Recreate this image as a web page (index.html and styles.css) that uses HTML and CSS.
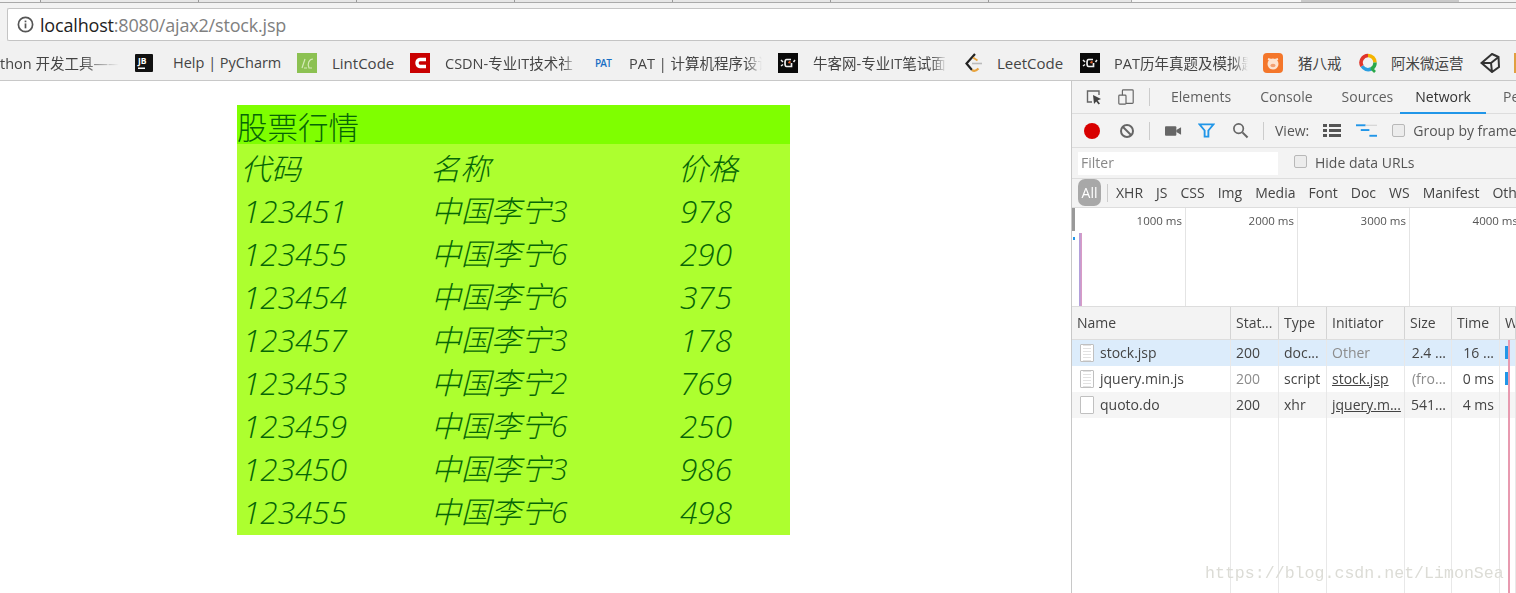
FILE: index.html
```html
<!DOCTYPE html>
<html lang="zh-CN">

<head>
    <meta charset="UTF-8">
    <title>stock.jsp</title>
    <link rel="stylesheet" href="styles.css">
</head>

<body>
    <div class="browser">
        <div class="tabstrip">
            <div class="tab"></div>
            <div class="tab"></div>
            <div class="tab"></div>
            <div class="tab"></div>
            <div class="tab"></div>
            <div class="tab"></div>
            <div class="tab tab-last"></div>
            <div class="tab tab-active"></div>
            <div class="tab tab-back"></div>
        </div>

        <div class="addressrow">
            <div class="address">
                <svg class="info-icon" viewBox="0 0 16 16">
                    <circle cx="8" cy="8" r="6.7" fill="none" stroke="#555" stroke-width="1.6" />
                    <rect x="7.2" y="7" width="1.6" height="4.6" fill="#555" />
                    <rect x="7.2" y="4.3" width="1.6" height="1.6" fill="#555" />
                </svg>
                <span class="host">localhost</span><span class="path">:8080/ajax2/stock.jsp</span>
            </div>
        </div>

        <div class="bookmarks">
            <div class="bm bm-cut">thon 开发工具——</div>
            <div class="bm bm-jb">
                <svg class="bm-icon" viewBox="0 0 18 18">
                    <rect width="18" height="18" rx="1" fill="#111" />
                    <text x="3" y="10" class="jb-text">JB</text>
                    <rect x="3" y="13.5" width="7" height="1.5" fill="#fff" />
                </svg>
                <span class="bm-text">Help | PyCharm</span>
            </div>
            <div class="bm bm-lint">
                <svg class="bm-icon" viewBox="0 0 20 20">
                    <rect width="20" height="20" fill="#8cc152" />
                    <path d="M5 15 L8 6 M7 15 H10 M16 6 C12 6 10 11 12 15 H15" fill="none" stroke="#d5eab8" stroke-width="1.2" />
                </svg>
                <span class="bm-text bm-wide">LintCode</span>
            </div>
            <div class="bm bm-csdn">
                <svg class="bm-icon" viewBox="0 0 20 20">
                    <rect width="20" height="20" fill="#c90000" />
                    <path d="M16 6.5 H10 C6 6.5 6 13.5 10 13.5 H16" fill="none" stroke="#fff" stroke-width="3.4" />
                </svg>
                <span class="bm-text fade">CSDN-专业IT技术社</span>
            </div>
            <div class="bm bm-pat">
                <span class="pat-logo">PAT</span>
                <span class="bm-text fade">PAT | 计算机程序设计</span>
            </div>
            <div class="bm bm-nk">
                <svg class="bm-icon" viewBox="0 0 20 20">
                    <use href="#nk-logo" />
                </svg>
                <span class="bm-text fade">牛客网-专业IT笔试面</span>
            </div>
            <div class="bm bm-leet">
                <svg class="bm-icon" viewBox="0 0 20 20">
                    <path d="M11 1 L2.5 10.5 L8 17" fill="none" stroke="#222" stroke-width="2.2" />
                    <path d="M8 17 C10 18.5 12 18 14.5 15.5" fill="none" stroke="#e8a33d" stroke-width="2.2" />
                    <path d="M8 10.5 H18" fill="none" stroke="#bbb" stroke-width="1.6" />
                    <path d="M9 4.5 L13.5 7.5" fill="none" stroke="#e8a33d" stroke-width="1.8" />
                </svg>
                <span class="bm-text bm-wide">LeetCode</span>
            </div>
            <div class="bm bm-patreal">
                <svg class="bm-icon" viewBox="0 0 20 20">
                    <use href="#nk-logo" />
                </svg>
                <span class="bm-text fade">PAT历年真题及模拟题</span>
            </div>
            <div class="bm bm-pig">
                <svg class="bm-icon" viewBox="0 0 20 20">
                    <rect width="20" height="20" rx="4" fill="#f4762a" />
                    <circle cx="10" cy="11" r="5.5" fill="#fde3cf" />
                    <path d="M5 6 L8 7 M15 6 L12 7" stroke="#fde3cf" stroke-width="2" />
                    <ellipse cx="10" cy="12.5" rx="2.6" ry="1.7" fill="#f4a070" />
                </svg>
                <span class="bm-text">猪八戒</span>
            </div>
            <div class="bm bm-ami">
                <svg class="bm-icon" viewBox="0 0 20 20">
                    <path d="M10 2.5 A7 7 0 0 1 17 9.5" fill="none" stroke="#f4b400" stroke-width="3.6" />
                    <path d="M17 9.5 A7 7 0 0 1 13 16" fill="none" stroke="#2aa84a" stroke-width="3.6" />
                    <path d="M13 16 A7 7 0 0 1 4 13" fill="none" stroke="#2a9ee0" stroke-width="3.6" />
                    <path d="M4 13 A7 7 0 0 1 10 2.5" fill="none" stroke="#e0352b" stroke-width="3.6" />
                    <path d="M13 15 L17 19" stroke="#2aa84a" stroke-width="2.6" />
                </svg>
                <span class="bm-text">阿米微运营</span>
            </div>
            <div class="bm bm-unity">
                <svg class="bm-icon" viewBox="0 0 20 20">
                    <path d="M12 1 L18.5 4 L19 14 L12 19 L1.5 10 Z M1.5 10 H11 L18.5 4 M11 10 L12 19" fill="none" stroke="#333" stroke-width="2" />
                </svg>
            </div>
            <div class="bm-next"></div>
        </div>

        <div class="workspace">
            <div class="page">
                <div class="stock">
                    <div class="stock-title">股票行情</div>
                    <table class="stock-table">
                        <thead>
                            <tr><th>代码</th><th>名称</th><th>价格</th></tr>
                        </thead>
                        <tbody>
                            <tr><td>123451</td><td>中国李宁3</td><td>978</td></tr>
                            <tr><td>123455</td><td>中国李宁6</td><td>290</td></tr>
                            <tr><td>123454</td><td>中国李宁6</td><td>375</td></tr>
                            <tr><td>123457</td><td>中国李宁3</td><td>178</td></tr>
                            <tr><td>123453</td><td>中国李宁2</td><td>769</td></tr>
                            <tr><td>123459</td><td>中国李宁6</td><td>250</td></tr>
                            <tr><td>123450</td><td>中国李宁3</td><td>986</td></tr>
                            <tr><td>123455</td><td>中国李宁6</td><td>498</td></tr>
                        </tbody>
                    </table>
                </div>
            </div>

            <div class="devtools">
                <div class="dt-tabs">
                    <svg class="dt-icon" viewBox="0 0 18 18">
                        <path d="M7 14 H2.5 V3 H14 V7" fill="none" stroke="#666" stroke-width="1.4" />
                        <path d="M8 7 L16 11 L12.6 12.4 L15 15.5 L13.6 16.6 L11.2 13.4 L9 16 Z" fill="#444" />
                    </svg>
                    <svg class="dt-icon" viewBox="0 0 20 20">
                        <rect x="6" y="2" width="12" height="15" rx="1" fill="none" stroke="#666" stroke-width="1.3" />
                        <rect x="2" y="8" width="8" height="10" rx="1" fill="#f3f3f3" stroke="#666" stroke-width="1.3" />
                    </svg>
                    <span class="dt-sep"></span>
                    <span class="dt-tab">Elements</span>
                    <span class="dt-tab">Console</span>
                    <span class="dt-tab">Sources</span>
                    <span class="dt-tab dt-tab-on">Network</span>
                    <span class="dt-tab">Pe</span>
                </div>

                <div class="dt-tools">
                    <span class="rec"></span>
                    <svg class="tool-clear" viewBox="0 0 16 16">
                        <circle cx="8" cy="8" r="6" fill="none" stroke="#666" stroke-width="2" />
                        <path d="M4 4 L12 12" stroke="#666" stroke-width="2" />
                    </svg>
                    <span class="dt-sep"></span>
                    <svg class="tool-cam" viewBox="0 0 18 12">
                        <rect x="0" y="1" width="12" height="10" rx="1" fill="#666" />
                        <path d="M12 5 L17 2 V10 L12 7 Z" fill="#666" />
                    </svg>
                    <svg class="tool-filter" viewBox="0 0 18 16">
                        <path d="M1.5 1.5 H16.5 L11 8 V14.5 H7 V8 Z" fill="none" stroke="#2196e8" stroke-width="2" />
                    </svg>
                    <svg class="tool-search" viewBox="0 0 18 18">
                        <circle cx="7" cy="7" r="5" fill="none" stroke="#666" stroke-width="1.8" />
                        <path d="M11 11 L16.5 16.5" stroke="#666" stroke-width="2.2" />
                    </svg>
                    <span class="dt-sep"></span>
                    <span class="view-label">View:</span>
                    <svg class="tool-list" viewBox="0 0 18 13">
                        <path d="M0 1.5 H4 M6 1.5 H18 M0 6.5 H4 M6 6.5 H18 M0 11.5 H4 M6 11.5 H18" stroke="#555" stroke-width="3" />
                    </svg>
                    <svg class="tool-wf" viewBox="0 0 22 14">
                        <path d="M0 1 H10" stroke="#2196e8" stroke-width="2" />
                        <path d="M10 1 H22" stroke="#ccc" stroke-width="1" />
                        <path d="M5 6 H14" stroke="#2196e8" stroke-width="2" />
                        <path d="M14 12 H22" stroke="#2196e8" stroke-width="2" />
                    </svg>
                    <span class="check"></span>
                    <span class="group-label">Group by frame</span>
                </div>

                <div class="dt-filter">
                    <div class="filter-input">Filter</div>
                    <span class="check"></span>
                    <span class="hide-label">Hide data URLs</span>
                </div>

                <div class="dt-types">
                    <span class="type-all">All</span>
                    <span class="types-sep"></span>
                    <span>XHR</span>
                    <span>JS</span>
                    <span>CSS</span>
                    <span>Img</span>
                    <span>Media</span>
                    <span>Font</span>
                    <span>Doc</span>
                    <span>WS</span>
                    <span>Manifest</span>
                    <span>Other</span>
                </div>

                <div class="overview">
                    <div class="ov-cell"><span>1000 ms</span></div>
                    <div class="ov-cell"><span>2000 ms</span></div>
                    <div class="ov-cell"><span>3000 ms</span></div>
                    <div class="ov-cell"><span>4000 ms</span></div>
                    <i class="ov-handle"></i>
                    <i class="ov-dot"></i>
                    <i class="ov-bar"></i>
                </div>

                <div class="net">
                    <div class="net-row net-head">
                        <div>Name</div>
                        <div>Stat...</div>
                        <div>Type</div>
                        <div>Initiator</div>
                        <div>Size</div>
                        <div>Time</div>
                        <div>W</div>
                    </div>
                    <div class="net-row net-selected">
                        <div class="name-cell"><span class="file-icon file-lines"></span>stock.jsp</div>
                        <div>200</div>
                        <div>doc...</div>
                        <div class="muted">Other</div>
                        <div class="right">2.4 ...</div>
                        <div class="right">16 ...</div>
                        <div><i class="wf-bar"></i></div>
                    </div>
                    <div class="net-row">
                        <div class="name-cell"><span class="file-icon file-lines"></span>jquery.min.js</div>
                        <div class="muted">200</div>
                        <div>script</div>
                        <div class="link">stock.jsp</div>
                        <div class="right muted">(fro...</div>
                        <div class="right">0 ms</div>
                        <div><i class="wf-bar"></i></div>
                    </div>
                    <div class="net-row net-alt">
                        <div class="name-cell"><span class="file-icon"></span>quoto.do</div>
                        <div>200</div>
                        <div>xhr</div>
                        <div class="link">jquery.m...</div>
                        <div class="right">541...</div>
                        <div class="right">4 ms</div>
                        <div></div>
                    </div>
                    <div class="net-row net-fill">
                        <div></div><div></div><div></div><div></div><div></div><div></div><div></div>
                    </div>
                    <i class="wf-line"></i>
                    <div class="watermark">https://blog.csdn.net/LimonSea</div>
                </div>
            </div>
        </div>
    </div>

    <svg class="defs" width="0" height="0">
        <symbol id="nk-logo" viewBox="0 0 20 20">
            <rect width="20" height="20" fill="#0a0a0a" />
            <path d="M13 6.5 H8.5 C6.5 6.5 6.5 13.5 8.5 13.5 H13.5 V10" fill="none" stroke="#eee" stroke-width="1.7" />
            <path d="M3 7 L5 9 M3 13 L5 11.5 M17 7 L15.5 9" fill="none" stroke="#eee" stroke-width="1.5" />
            <path d="M10.5 10 L12.5 8.5" stroke="#e2622b" stroke-width="1.8" />
        </symbol>
    </svg>
</body>

</html>
```

FILE: styles.css
```css
* {
    box-sizing: border-box;
}

html,
body {
    margin: 0;
    padding: 0;
    height: 100%;
    overflow: hidden;
    background-color: #fff;
}

body {
    font-family: "Open Sans", "Noto Sans CJK SC", sans-serif;
    color: #333;
}

.defs {
    position: absolute;
}

.browser {
    display: flex;
    flex-direction: column;
    height: 593px;
    width: 1516px;
    overflow: hidden;
    filter: blur(0.35px);
}

/* tab strip, only its bottom edge is in the picture */
.tabstrip {
    display: flex;
    height: 3px;
    background-color: #f2f2f2;
    border-bottom: 1px solid #a9a9a9;
    padding-left: 40px;
}

.tab {
    width: 158px;
    border-left: 1px solid #999;
    background-color: #e6e6e6;
}

.tab-last {
    width: 143px;
}

.tab-active {
    width: 170px;
    background-color: #f6f6f6;
    border-left-color: #aaa;
}

.tab-back {
    width: 158px;
    background-color: #c9c9c9;
    border-left: 0;
}

.addressrow {
    height: 38px;
    background-color: #f2f2f2;
    padding: 5px 0 0 7px;
}

.address {
    display: flex;
    align-items: center;
    height: 33px;
    background-color: #fff;
    border: 1px solid #c4c4c4;
    border-right: 0;
    border-radius: 2px 0 0 2px;
    padding-left: 9px;
    font-size: 18px;
    letter-spacing: -0.18px;
}

.info-icon {
    width: 17px;
    height: 17px;
    margin-right: 6px;
}

.host {
    color: #222;
}

.path {
    color: #808080;
}

.bookmarks {
    display: flex;
    align-items: center;
    height: 40px;
    padding-top: 4px;
    background-color: #f1f1f1;
    border-bottom: 1px solid #c8c8c8;
    font-size: 14.5px;
    color: #444;
    white-space: nowrap;
}

.bm {
    display: flex;
    align-items: center;
    flex: none;
    overflow: hidden;
}

.bm-cut {
    width: 135px;
    display: block;
    -webkit-mask-image: linear-gradient(to right, #000 60%, transparent 88%);
    mask-image: linear-gradient(to right, #000 60%, transparent 88%);
}

.bm-icon {
    flex: none;
    width: 20px;
    height: 20px;
}

.bm-text {
    flex: none;
    margin-left: 15px;
}

.bm-wide {
    font-size: 15px;
}

.fade {
    -webkit-mask-image: linear-gradient(to right, #000 88%, transparent);
    mask-image: linear-gradient(to right, #000 88%, transparent);
    overflow: hidden;
}

.jb-text {
    font-family: "Open Sans", sans-serif;
    font-size: 8.5px;
    font-weight: 700;
    fill: #fff;
}

.bm-jb {
    width: 162px;
}

.bm-jb .bm-icon {
    width: 18px;
    height: 18px;
}

.bm-jb .bm-text {
    margin-left: 20px;
}

.bm-lint {
    width: 113px;
}

.bm-csdn {
    width: 185px;
}

.bm-csdn .fade {
    width: 133px;
}

.bm-pat {
    width: 183px;
}

.pat-logo {
    flex: none;
    width: 18px;
    font-size: 10px;
    font-weight: 600;
    letter-spacing: -0.8px;
    color: #1a6fc4;
}

.bm-pat .fade {
    width: 133px;
    margin-left: 16px;
}

.bm-nk {
    width: 186px;
}

.bm-nk .fade {
    width: 134px;
}

.bm-leet {
    width: 116px;
}

.bm-leet .bm-text {
    margin-left: 13px;
}

.bm-patreal {
    width: 183px;
}

.bm-patreal .fade {
    width: 134px;
    margin-left: 14px;
}

.bm-pig {
    width: 95px;
}

.bm-ami {
    width: 122px;
}

.bm-ami .bm-text {
    margin-left: 13px;
}

.bm-unity {
    width: 34px;
}

.bm-next {
    width: 2px;
    height: 20px;
    background-color: #e0a040;
}

.workspace {
    display: flex;
    flex: 1;
    min-height: 0;
}

.page {
    width: 1071px;
    flex: none;
    padding: 24px 0 0 237px;
    background-color: #fff;
}

.stock {
    width: 553px;
    height: 430px;
    background-color: #adff2f;
    color: #066606;
    font-weight: 300;
}

.stock-title {
    height: 39px;
    background-color: #7fff00;
    font-size: 30.5px;
    line-height: 44px;
}

.stock-table {
    border-collapse: collapse;
    width: 100%;
    table-layout: fixed;
    font-size: 30px;
    font-style: italic;
    margin-top: 2px;
}

.stock-table th,
.stock-table td {
    height: 43px;
    font-weight: 300;
    text-align: left;
    line-height: 43px;
}

.stock-table td:nth-child(1) {
    width: 192px;
    padding: 0 0 0 6px;
    font-size: 31.5px;
}

.stock-table td:nth-child(2) {
    width: 247px;
    padding: 0 0 0 2px;
}

.stock-table td:nth-child(3) {
    padding: 0 0 0 4px;
    font-size: 31.5px;
}

.stock-table th:nth-child(1) {
    width: 192px;
    padding: 0 0 0 4px;
}

.stock-table th:nth-child(2) {
    width: 247px;
    padding: 0 0 0 1px;
}

.stock-table th:nth-child(3) {
    padding: 0 0 0 2px;
}

.stock-table thead tr {
    position: relative;
    top: 1px;
}

.devtools {
    flex: 1;
    display: flex;
    flex-direction: column;
    min-width: 0;
    border-left: 1px solid #c8c8c8;
    font-size: 14px;
    color: #555;
    white-space: nowrap;
    overflow: hidden;
}

.dt-tabs,
.dt-tools,
.dt-filter,
.dt-types {
    display: flex;
    align-items: center;
    flex: none;
    background-color: #f3f3f3;
    border-bottom: 1px solid #ddd;
}

.dt-tabs {
    height: 33px;
    padding-left: 13px;
}

.dt-icon {
    flex: none;
    width: 18px;
    height: 18px;
    margin-right: 14px;
}

.dt-sep {
    flex: none;
    width: 1px;
    height: 18px;
    background-color: #ccc;
}

.dt-tab {
    padding: 0 10px;
    line-height: 32px;
    height: 33px;
    color: #5f5f5f;
    margin-right: 9px;
}

.dt-tabs .dt-sep {
    margin-right: 11px;
}

.dt-tab-on {
    color: #333;
    border-bottom: 2px solid #2196e8;
    padding: 0 15px;
    margin: 0 7px 0 -12px;
}

.dt-tools {
    height: 34px;
    padding-left: 12px;
}

.rec {
    flex: none;
    width: 16px;
    height: 16px;
    border-radius: 50%;
    background-color: #d80000;
}

.tool-clear {
    flex: none;
    width: 16px;
    height: 16px;
    margin: 0 14px 0 19px;
}

.tool-cam {
    flex: none;
    width: 17px;
    height: 12px;
    margin-left: 15px;
}

.tool-filter {
    flex: none;
    width: 17px;
    height: 15px;
    margin-left: 16px;
}

.tool-search {
    flex: none;
    width: 17px;
    height: 17px;
    margin: 0 14px 0 17px;
}

.view-label {
    margin-left: 11px;
}

.tool-list {
    flex: none;
    width: 18px;
    height: 13px;
    margin-left: 14px;
}

.tool-wf {
    flex: none;
    width: 21px;
    height: 14px;
    margin-left: 15px;
}

.check {
    flex: none;
    width: 13px;
    height: 13px;
    border: 1px solid #b8b8b8;
    border-radius: 2px;
    background-color: #ececec;
}

.dt-tools .check {
    margin-left: 15px;
}

.group-label {
    margin-left: 8px;
}

.dt-filter {
    height: 31px;
    padding-left: 6px;
}

.filter-input {
    flex: none;
    width: 200px;
    height: 23px;
    background-color: #fff;
    color: #888;
    padding-left: 3px;
    line-height: 22px;
}

.dt-filter .check {
    margin-left: 16px;
    margin-top: -3px;
}

.hide-label {
    margin-left: 8px;
    margin-top: -2px;
}

.dt-types {
    height: 29px;
    padding: 0 0 1px 6px;
    gap: 13px;
    font-size: 14px;
    color: #444;
}

.type-all {
    flex: none;
    width: 23px;
    height: 27px;
    line-height: 27px;
    text-align: center;
    border-radius: 7px;
    background-color: #a8a8a8;
    color: #fff;
}

.types-sep {
    flex: none;
    width: 1px;
    height: 18px;
    background-color: #ccc;
    margin: 0 -5px 0 -7px;
}

.overview {
    position: relative;
    display: flex;
    flex: none;
    height: 99px;
    padding-left: 2px;
    background-color: #fff;
    border-bottom: 1px solid #ddd;
}

.ov-cell {
    flex: none;
    width: 112px;
    border-right: 1px solid #e4e4e4;
    text-align: right;
    padding: 5px 3px 0 0;
    font-size: 11.5px;
    color: #555;
}

.ov-handle {
    position: absolute;
    left: 0;
    top: 0;
    width: 3px;
    height: 23px;
    background-color: #999;
}

.ov-dot {
    position: absolute;
    left: 1px;
    top: 29px;
    width: 2px;
    height: 3px;
    background-color: #2196e8;
}

.ov-bar {
    position: absolute;
    left: 7px;
    top: 25px;
    width: 3px;
    height: 73px;
    background-image: linear-gradient(to right, #a9a0e0, #e19ac0);
}

.net {
    position: relative;
    flex: 1;
    display: flex;
    flex-direction: column;
    min-height: 0;
    font-size: 14px;
    color: #444;
}

.net-row {
    display: grid;
    grid-template-columns: 159px 48px 48px 78px 47px 48px 16px;
    flex: none;
    height: 26px;
    line-height: 26px;
}

.net-row > div {
    padding-left: 5px;
    border-right: 1px solid #e8e8e8;
    overflow: hidden;
}

.net-head {
    height: 33px;
    line-height: 32px;
    background-color: #f3f3f3;
    border-bottom: 1px solid #ddd;
}

.net-head > div {
    border-right-color: #d4d4d4;
}

.net-selected {
    background-color: #dcecfb;
}

.net-alt {
    background-color: #f5f5f5;
}

.net-fill {
    flex: 1;
}

.name-cell {
    display: flex;
    align-items: center;
}

.file-icon {
    flex: none;
    width: 14px;
    height: 18px;
    margin: 0 6px 0 3px;
    background-color: #fff;
    border: 1px solid #c0c0c0;
    border-radius: 1px;
}

.file-lines {
    background-color: #fff;
    background-image: repeating-linear-gradient(to bottom, #e2e2e2 0, #e2e2e2 1px, transparent 1px, transparent 3px);
    background-size: 8px 100%;
    background-position: center;
    background-repeat: no-repeat;
}

.muted {
    color: #8c8c8c;
}

.link {
    text-decoration: underline;
}

.right {
    text-align: right;
    padding-right: 5px;
}

.wf-bar {
    display: block;
    width: 4px;
    height: 13px;
    margin: 6px 0 0 0;
    background-color: #2196e8;
}

.wf-line {
    position: absolute;
    left: 436px;
    top: 33px;
    bottom: 0;
    width: 2px;
    background-color: #e89ab0;
}

.watermark {
    position: absolute;
    left: 133px;
    top: 257px;
    font-family: "Liberation Mono", monospace;
    font-size: 16.6px;
    color: #dcdcd6;
}
```
